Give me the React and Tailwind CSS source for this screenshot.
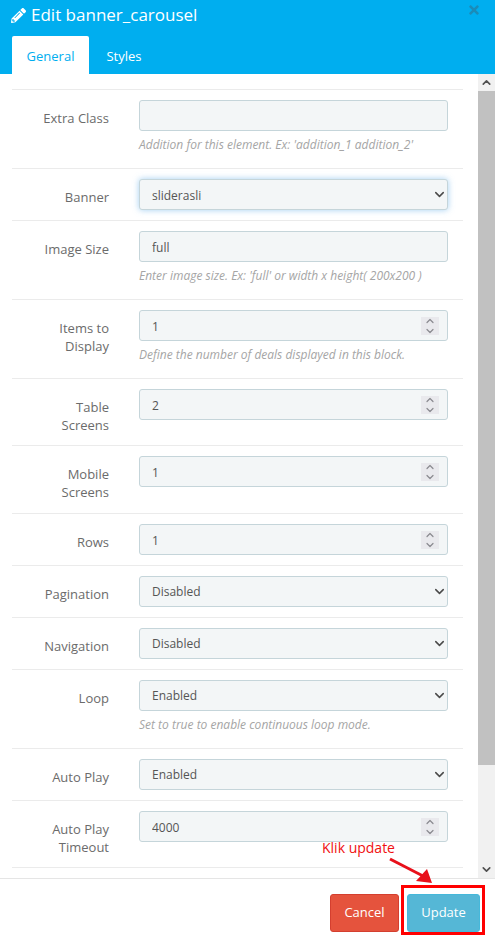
import { FaPencilAlt, FaTimes } from 'react-icons/fa'
import { ChevronUp, ChevronDown } from 'lucide-react'

const fieldClass =
  'block w-full h-[31px] rounded-[3px] border border-[#c5d5da] bg-[#f3f6f7] px-3 pt-[2px] text-[12px] text-[#555555] outline-none'

function Row({ label, help, children }) {
  return (
    <div className="flex border-b border-[#ebebeb] pt-[10px] pb-[10.1px]">
      <label className="ml-[27px] w-[70px] shrink-0 pt-[9px] pb-[1px] text-right text-[13px] leading-[18px] text-[#6b6b6b]">{label}</label>
      <div className="ml-[30px] w-[309px]">
        {children}
        {help && <p className="mt-[6px] mb-[5px] text-[12px] leading-[16px] italic text-[#a5a5a5]">{help}</p>}
      </div>
    </div>
  )
}

function Text({ value = '' }) {
  return <input type="text" readOnly value={value} className={fieldClass} />
}

function Num({ value }) {
  return (
    <div className="relative">
      <input type="text" readOnly value={value} className={fieldClass} />
      <div className="absolute right-[9px] top-[7px] flex h-[18px] w-[18px] flex-col items-center justify-center bg-[#e9e9ed] text-[#8a8a90]">
        <ChevronUp size={12} strokeWidth={2.4} className="-mb-[1px] shrink-0" />
        <ChevronDown size={12} strokeWidth={2.4} className="-mt-[1px] shrink-0" />
      </div>
    </div>
  )
}

function Sel({ value, focus }) {
  return (
    <div className="relative">
      <select
        defaultValue={value}
        className={`${fieldClass} appearance-none ${focus ? 'shadow-[0_0_6px_rgba(102,175,233,0.6)] border-[#a9c8dc]' : ''}`}
      >
        <option>{value}</option>
      </select>
      <ChevronDown size={15} strokeWidth={2.4} className="pointer-events-none absolute right-[1px] top-[8px] text-[#4a4a4a]" />
    </div>
  )
}

export default function App() {
  return (
    <div className="relative flex h-[935px] w-[495px] flex-col overflow-hidden bg-white font-['Open_Sans',sans-serif]">
      {/* Header */}
      <header className="relative h-[74px] shrink-0 bg-[#00aeef] pl-[11px]">
        <h1 className="flex h-[36px] items-center pb-[6px] text-[17px] text-white">
          <FaPencilAlt size={15} className="mr-[5px]" />
          Edit banner_carousel
        </h1>
        <FaTimes size={14} className="absolute right-[14px] top-[3px] text-[#1b8bb8]" />
        <div className="ml-[1px] flex text-[13px]">
          <div className="flex h-[38px] w-[77px] items-center justify-center rounded-t-[2px] bg-white pt-[4px] text-[#00aeef]">General</div>
          <div className="flex h-[38px] w-[71px] items-center justify-center pt-[4px] pr-[1px] text-white">Styles</div>
        </div>
      </header>

      {/* Body */}
      <div className="flex h-[804px] shrink-0 overflow-hidden">
        <div className="w-[483px] shrink-0 pl-[12px] pr-[20px] pt-[15px]">
          <div className="border-b border-[#ebebeb]" />
          <Row label="Extra Class" help="Addition for this element. Ex: 'addition_1 addition_2'">
            <Text />
          </Row>
          <Row label="Banner">
            <Sel value="sliderasli" focus />
          </Row>
          <Row label="Image Size" help="Enter image size. Ex: 'full' or width x height( 200x200 )">
            <Text value="full" />
          </Row>
          <Row label="Items to Display" help="Define the number of deals displayed in this block.">
            <Num value="1" />
          </Row>
          <Row label="Table Screens">
            <Num value="2" />
          </Row>
          <Row label="Mobile Screens">
            <Num value="1" />
          </Row>
          <Row label="Rows">
            <Num value="1" />
          </Row>
          <Row label="Pagination">
            <Sel value="Disabled" />
          </Row>
          <Row label="Navigation">
            <Sel value="Disabled" />
          </Row>
          <Row label="Loop" help="Set to true to enable continuous loop mode.">
            <Sel value="Enabled" />
          </Row>
          <Row label="Auto Play">
            <Sel value="Enabled" />
          </Row>
          <Row label="Auto Play Timeout">
            <Num value="4000" />
          </Row>
        </div>

        {/* Scrollbar */}
        <div className="ml-[-5px] flex w-[17px] shrink-0 flex-col bg-[#f1f1f1]">
          <div className="flex h-[17px] items-center justify-center text-[#505050]">
            <ChevronUp size={13} strokeWidth={3} />
          </div>
          <div className="h-[674px] bg-[#c1c1c1]" />
          <div className="mt-auto flex h-[17px] items-center justify-center text-[#505050]">
            <ChevronDown size={13} strokeWidth={3} />
          </div>
        </div>
      </div>

      {/* Footer */}
      <footer className="flex flex-1 items-start justify-end gap-[8px] border-t border-[#e5e5e5] pt-[15px] pr-[15px]">
        <button className="h-[38px] w-[69px] rounded-[3px] border border-[#d43f2f] bg-[#e5533d] text-[13px] text-white">Cancel</button>
        <button className="h-[38px] w-[73px] rounded-[3px] border border-[#46b8da] bg-[#55b7d6] text-[13px] text-white">Update</button>
      </footer>

      {/* Annotation drawn over the screenshot */}
      <div className="absolute left-[401px] top-[885px] h-[50px] w-[84px] border-[3px] border-[#ff0000]" />
      <span className="absolute left-[322px] top-[838px] text-[14px] leading-[20px] text-[#f01010]">Klik update</span>
      <svg className="absolute left-[385px] top-[855px]" width="50" height="32" viewBox="0 0 50 32">
        <line x1="5" y1="4" x2="38" y2="21" stroke="#e8101a" strokeWidth="3" />
        <polygon points="47,28 31,26 42,14" fill="#e8101a" />
      </svg>
    </div>
  )
}
